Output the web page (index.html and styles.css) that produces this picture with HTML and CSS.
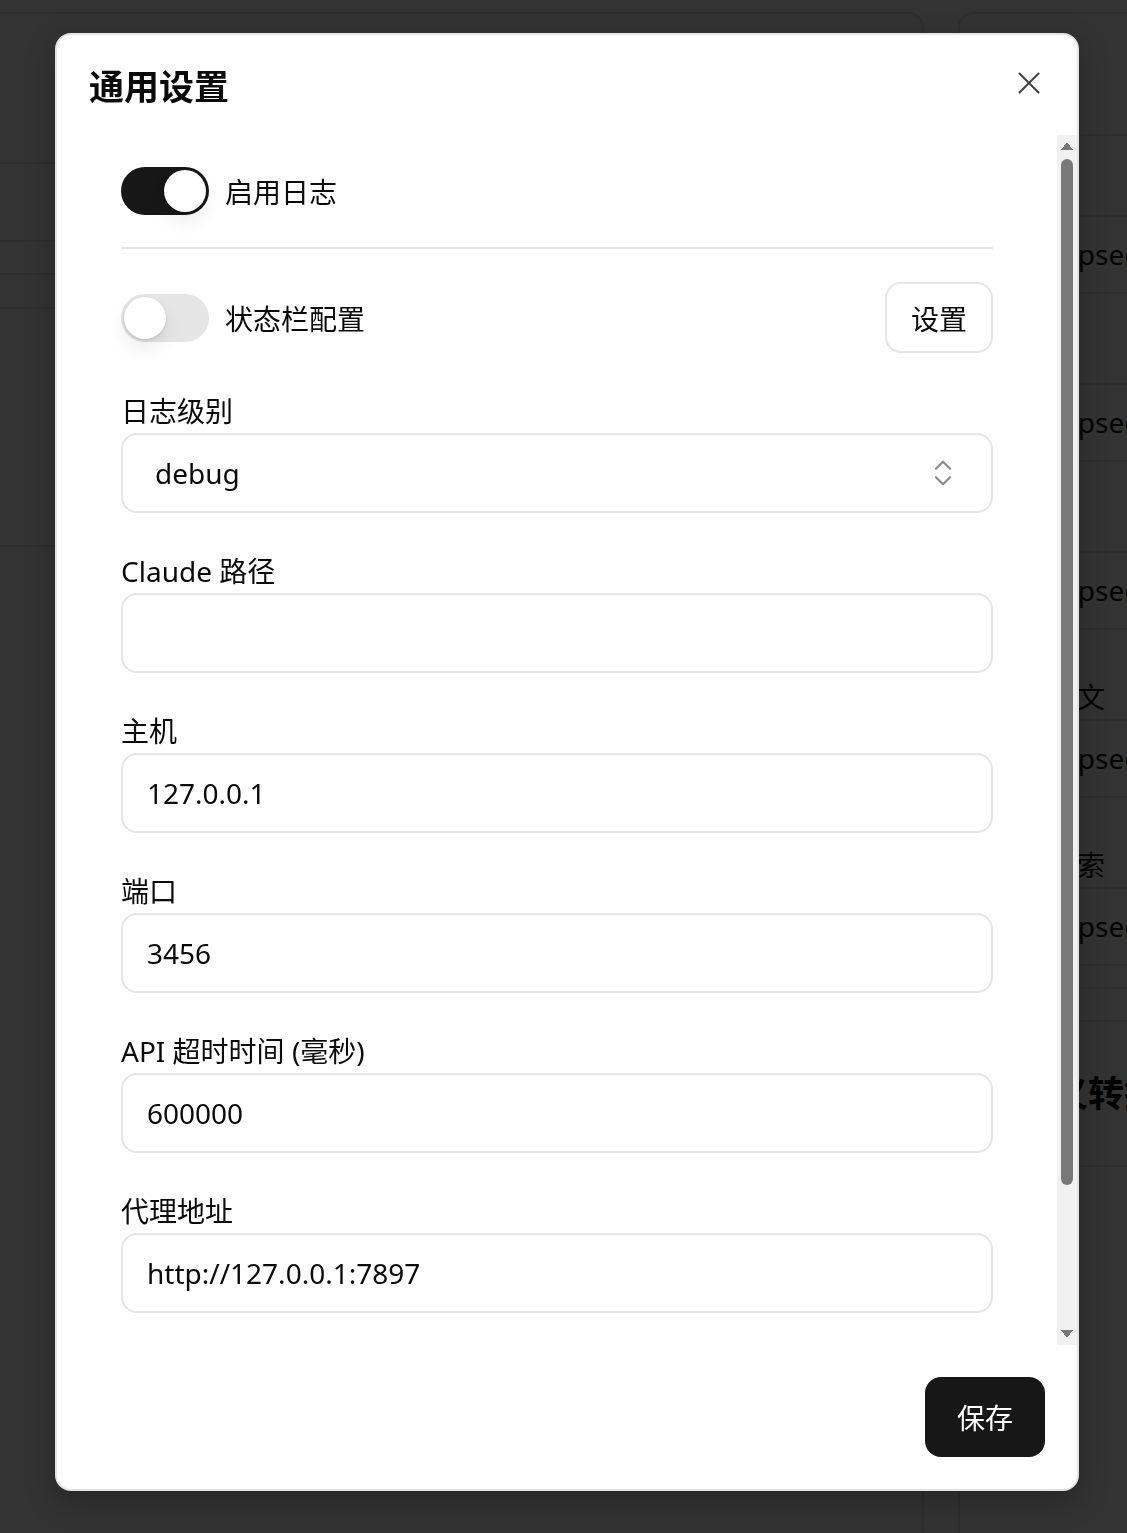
FILE: index.html
```html
<!DOCTYPE html>
<html lang="zh-CN">
<head>
    <meta charset="UTF-8">
    <meta name="viewport" content="width=device-width, initial-scale=1.0">
    <title>通用设置</title>
    <link rel="stylesheet" href="styles.css">
</head>
<body>

    <!-- 主页面：供应商列表 + 路由 -->
    <div class="page">
        <section class="card providers">
            <div class="card-head"></div>
            <div class="list-row row-a"></div>
            <div class="list-row row-b"></div>
            <div class="list-row row-c"></div>
            <div class="list-row row-d"></div>
        </section>

        <div class="column">
            <section class="card router">
                <h2 class="card-title">路由</h2>
                <div class="card-body">
                    <div class="route">
                        <label>默认</label>
                        <div class="route-select">deepseek,deepseek-chat</div>
                    </div>
                    <div class="route">
                        <label>后台</label>
                        <div class="route-select">deepseek,deepseek-chat</div>
                    </div>
                    <div class="route">
                        <label>思考</label>
                        <div class="route-select">deepseek,deepseek-chat</div>
                    </div>
                    <div class="route">
                        <label>长上下文</label>
                        <div class="route-select">deepseek,deepseek-chat</div>
                    </div>
                    <div class="route">
                        <label>网络搜索</label>
                        <div class="route-select">deepseek,deepseek-chat</div>
                    </div>
                </div>
            </section>

            <section class="card transformers">
                <h2 class="card-title wide">自定义转换器</h2>
            </section>
        </div>
    </div>

    <!-- 遮罩层 -->
    <div class="overlay"></div>

    <!-- 对话框：通用设置 -->
    <div class="dialog">
        <div class="dialog-header">
            <h2>通用设置</h2>
            <button class="close-btn" type="button">
                <svg viewBox="0 0 24 24" fill="none" stroke="currentColor" stroke-width="1.3" stroke-linecap="round" stroke-linejoin="round">
                    <path d="M18 6 6 18"/>
                    <path d="m6 6 12 12"/>
                </svg>
            </button>
        </div>

        <div class="dialog-body">
            <div class="body-scroll">
                <div class="switch-row first">
                    <div class="switch-label">
                        <span class="switch on"><span class="knob"></span></span>
                        <span>启用日志</span>
                    </div>
                </div>

                <div class="switch-row">
                    <div class="switch-label">
                        <span class="switch"><span class="knob"></span></span>
                        <span>状态栏配置</span>
                    </div>
                    <button class="btn-outline" type="button">设置</button>
                </div>

                <div class="field">
                    <label>日志级别</label>
                    <button class="select" type="button">
                        <span>debug</span>
                        <svg viewBox="0 0 24 24" fill="none" stroke="currentColor" stroke-width="1.5" stroke-linecap="round" stroke-linejoin="round">
                            <path d="m7 15 5 5 5-5"/>
                            <path d="m7 9 5-5 5 5"/>
                        </svg>
                    </button>
                </div>

                <div class="field">
                    <label for="claude-path">Claude 路径</label>
                    <input class="input" id="claude-path" type="text" value="">
                </div>

                <div class="field">
                    <label for="host">主机</label>
                    <input class="input" id="host" type="text" value="127.0.0.1">
                </div>

                <div class="field">
                    <label for="port">端口</label>
                    <input class="input" id="port" type="text" value="3456">
                </div>

                <div class="field">
                    <label for="timeout">API 超时时间 (毫秒)</label>
                    <input class="input" id="timeout" type="text" value="600000">
                </div>

                <div class="field">
                    <label for="proxy">代理地址</label>
                    <input class="input" id="proxy" type="text" value="http://127.0.0.1:7897">
                </div>
            </div>

            <!-- 滚动条 -->
            <div class="scrollbar">
                <span class="sb-btn up"></span>
                <div class="sb-track"><span class="sb-thumb"></span></div>
                <span class="sb-btn down"></span>
            </div>
        </div>

        <div class="dialog-footer">
            <button class="btn-primary" type="button">保存</button>
        </div>
    </div>

</body>
</html>
```

FILE: styles.css
```css
* {
    box-sizing: border-box;
}
body {
    margin: 0;
    font-family: "Noto Sans", "Noto Sans CJK SC", sans-serif;
    color: #0a0a0a;
    background-color: #fff;
    overflow: hidden;
}

/* 主页面 */
.page {
    display: flex;
    gap: 34px;
    width: 1700px;
    margin-left: -40px;
    padding-top: 12px;
}
.card {
    background: #fff;
    border: 2px solid #e5e5e5;
    border-radius: 16px;
}
.providers {
    flex-shrink: 0;
    width: 964px;
    height: 1600px;
}
.card-head {
    height: 150px;
    border-bottom: 2px solid #e5e5e5;
}
.list-row {
    border-bottom: 2px solid #e5e5e5;
}
.row-a { height: 78px; }
.row-b { height: 33px; }
.row-c { height: 34px; }
.row-d { height: 238px; }

.column {
    flex-shrink: 0;
    width: 620px;
    display: flex;
    flex-direction: column;
    gap: 31px;
}
.card-title {
    margin: 0;
    height: 122px;
    padding: 0 33px;
    border-bottom: 2px solid #e5e5e5;
    font-size: 36px;
    line-height: 120px;
}
.card-title.wide {
    height: 145px;
    padding-left: 20px;
    line-height: 143px;
}
.card-body {
    padding: 37px 33px 21px;
}
.route + .route {
    margin-top: 47px;
}
.route label {
    display: block;
    font-size: 28px;
    line-height: 40px;
    margin-bottom: 2px;
}
.route-select {
    height: 79px;
    padding-left: 34px;
    border: 2px solid #e5e5e5;
    border-radius: 16px;
    font-size: 28px;
    line-height: 75px;
    white-space: nowrap;
}
.transformers {
    height: 600px;
}

/* 遮罩层 */
.overlay {
    position: fixed;
    inset: 0;
    background: rgba(0, 0, 0, 0.8);
}

/* 对话框 */
.dialog {
    position: fixed;
    top: 33px;
    left: 55px;
    width: 1024px;
    height: 1458px;
    display: flex;
    flex-direction: column;
    background: #fff;
    border: 2px solid #e3e3e3;
    border-radius: 16px;
    box-shadow: 0 10px 30px rgba(0, 0, 0, 0.25);
}
.dialog-header {
    display: flex;
    justify-content: space-between;
    align-items: flex-start;
    padding: 31px 32px 27px;
}
.dialog-header h2 {
    margin: 0;
    font-size: 35px;
    line-height: 42px;
    font-weight: 700;
}
.close-btn {
    width: 38px;
    height: 38px;
    margin: -2px -3px 0 0;
    padding: 0;
    border: none;
    background: none;
    color: #444;
    cursor: pointer;
}
.close-btn svg {
    display: block;
    width: 38px;
    height: 38px;
}

.dialog-body {
    flex: 1;
    min-height: 0;
    display: flex;
}
.body-scroll {
    flex: 1;
    min-width: 0;
    overflow: hidden;
    padding: 32px 64px 0;
}

/* 滚动条：上下箭头 + 滑块 */
.scrollbar {
    width: 20px;
    display: flex;
    flex-direction: column;
    background: #f1f1f1;
}
.sb-btn {
    height: 20px;
    background-repeat: no-repeat;
    background-size: 6px 8px;
}
.sb-btn.up {
    background-image:
        linear-gradient(to top left, #777 50%, transparent 50%),
        linear-gradient(to top right, #777 50%, transparent 50%);
    background-position: 4px 7px, 10px 7px;
}
.sb-btn.down {
    background-image:
        linear-gradient(to bottom left, #777 50%, transparent 50%),
        linear-gradient(to bottom right, #777 50%, transparent 50%);
    background-position: 4px 5px, 10px 5px;
}
.sb-track {
    flex: 1;
    padding: 4px;
}
.sb-thumb {
    display: block;
    height: 1026px;
    border-radius: 6px;
    background: #787878;
}

/* 开关行 */
.switch-row {
    display: flex;
    align-items: center;
    justify-content: space-between;
}
.switch-row.first {
    padding-bottom: 32px;
    margin-bottom: 33px;
    border-bottom: 2px solid #e5e5e5;
}
.switch-label {
    display: flex;
    align-items: center;
    gap: 16px;
    font-size: 28px;
}
.switch {
    display: flex;
    width: 88px;
    height: 48px;
    padding: 3px;
    border-radius: 24px;
    background: #e5e5e5;
}
.switch.on {
    justify-content: flex-end;
    background: #171717;
}
.knob {
    width: 42px;
    height: 42px;
    border-radius: 50%;
    background: #fff;
    box-shadow: 0 1px 3px rgba(0, 0, 0, 0.15), 0 10px 18px rgba(0, 0, 0, 0.08);
}

.btn-outline {
    height: 71px;
    padding: 0 24px;
    border: 2px solid #e5e5e5;
    border-radius: 16px;
    background: #fff;
    font: inherit;
    font-size: 28px;
    color: #0a0a0a;
}

/* 表单字段 */
.field {
    margin-top: 38px;
}
.field label {
    display: block;
    font-size: 28px;
    line-height: 40px;
    margin-bottom: 2px;
}
.input,
.select {
    display: block;
    width: 100%;
    height: 80px;
    padding: 0 24px;
    border: 2px solid #e5e5e5;
    border-radius: 16px;
    background: #fff;
    font: inherit;
    font-size: 28px;
    color: #0a0a0a;
    outline: none;
}
.select {
    display: flex;
    align-items: center;
    justify-content: space-between;
    padding: 0 31px 0 32px;
    text-align: left;
}
.select svg {
    width: 34px;
    height: 34px;
    color: #8a8a8a;
}

.dialog-footer {
    display: flex;
    justify-content: flex-end;
    padding: 32px;
}
.btn-primary {
    width: 120px;
    height: 80px;
    border: none;
    border-radius: 16px;
    background: #171717;
    color: #fff;
    font: inherit;
    font-size: 28px;
}
```
